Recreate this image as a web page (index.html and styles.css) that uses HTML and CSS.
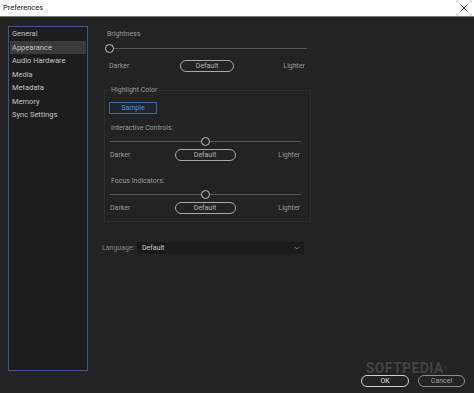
FILE: index.html
```html
<!doctype html>
<html lang="en">
<head>
    <meta charset="UTF-8">
    <title>Preferences</title>
    <link rel="stylesheet" href="styles.css">
</head>
<body>
<div class="titlebar">
    <span class="title">Preferences</span>
    <svg class="close" width="8" height="8" viewBox="0 0 8 8"><path d="M0.5 0.5L7.5 7.5M7.5 0.5L0.5 7.5" stroke="#333" stroke-width="0.9"/></svg>
</div>
<div class="main">
    <ul class="sidebar">
        <li>General</li>
        <li class="active">Appearance</li>
        <li>Audio Hardware</li>
        <li>Media</li>
        <li>Metadata</li>
        <li>Memory</li>
        <li>Sync Settings</li>
    </ul>
    <div class="content">
        <div class="brightness">
            <div class="label">Brightness</div>
            <div class="slider wide"><span class="thumb start"></span></div>
            <div class="range-row">
                <span class="left">Darker</span>
                <button class="pill b1">Default</button>
                <span class="right">Lighter</span>
            </div>
        </div>
        <fieldset class="group">
            <legend>Highlight Color</legend>
            <button class="sample">Sample</button>
            <div class="label sub">Interactive Controls:</div>
            <div class="slider"><span class="thumb mid"></span></div>
            <div class="range-row">
                <span class="left">Darker</span>
                <button class="pill b2">Default</button>
                <span class="right">Lighter</span>
            </div>
            <div class="label sub second">Focus Indicators:</div>
            <div class="slider"><span class="thumb mid"></span></div>
            <div class="range-row">
                <span class="left">Darker</span>
                <button class="pill b2">Default</button>
                <span class="right">Lighter</span>
            </div>
        </fieldset>
        <div class="lang">
            <span class="lang-label">Language:</span>
            <div class="select">
                <span>Default</span>
                <svg width="6" height="4" viewBox="0 0 6 4"><path d="M0.5 0.8L3 3.2L5.5 0.8" fill="none" stroke="#888" stroke-width="0.9"/></svg>
            </div>
        </div>
    </div>
</div>
<div class="footer">
    <span class="mark">SOFTPEDIA<sup>®</sup></span>
    <button class="pill ok">OK</button>
    <button class="pill cancel">Cancel</button>
</div>
</body>
</html>
```

FILE: styles.css
```css
* {
    margin: 0;
    padding: 0;
    list-style: none;
    box-sizing: border-box;
}

body {
    width: 474px;
    height: 393px;
    background: #232323;
    font-family: Roboto, "Noto Sans", sans-serif;
    font-size: 7px;
    color: #9a9a9a;
    overflow: hidden;
}

.titlebar {
    height: 17px;
    background: #fff;
    border-bottom: 1px solid #7c7c7c;
    display: flex;
    align-items: center;
    justify-content: space-between;
    padding: 0 6px 1px 3px;
}

.title {
    font-size: 7.5px;
    color: #222;
}

.main {
    display: flex;
    align-items: flex-start;
    padding: 9px 0 0 8px;
}

.sidebar {
    width: 80px;
    height: 345px;
    border: 1px solid #37598b;
    background: #1d1d1d;
    padding: 0 1px;
    font-size: 7.5px;
    color: #c2c2c2;
}

.sidebar li {
    height: 13.5px;
    line-height: 13.5px;
    padding-left: 2px;
}

.sidebar li.active {
    background: #3b3b3b;
}

.content {
    margin-left: 14px;
    width: 210px;
    padding-top: 3px;
}

.label {
    line-height: 10px;
}

.brightness {
    margin-left: 3px;
    width: 202px;
}

.brightness .label {
    padding-left: 2px;
}

.slider {
    position: relative;
    height: 9px;
    margin-top: 4px;
    margin-right: 9px;
}

.slider::before {
    content: '';
    position: absolute;
    left: 0;
    right: 0;
    top: 4px;
    height: 1px;
    background: #585858;
}

.slider.wide {
    margin-top: 5px;
    margin-right: 0;
}

.slider.wide::before {
    left: 8px;
}

.thumb {
    position: absolute;
    top: 0;
    width: 9px;
    height: 9px;
    border: 1.4px solid #c4c4c4;
    border-radius: 50%;
    background: #232323;
}

.thumb.start {
    left: 0;
}

.thumb.mid {
    left: calc(50% - 4.5px);
}

.range-row {
    display: grid;
    grid-template-columns: 1fr auto 1fr;
    align-items: center;
    height: 12px;
    margin-top: 3px;
}

.brightness .range-row {
    margin-top: 7px;
    padding: 0 2px 0 4px;
}

.group .range-row {
    margin-right: 10px;
}

.range-row .right {
    justify-self: end;
}

.pill {
    height: 12px;
    border: 1px solid #a8a8a8;
    border-radius: 6px;
    background: transparent;
    color: #b4b4b4;
    font-family: Roboto, "Noto Sans", sans-serif;
    font-size: 7px;
    line-height: 10px;
}

.b1 {
    width: 54px;
}

.b2 {
    width: 61px;
}

.group {
    margin: 13px 0 0 2px;
    width: 207px;
    border: 1px solid #2f2f2f;
    padding: 0 0 7px 5px;
}

.group legend {
    line-height: 10px;
    padding: 0 1px;
}

.sample {
    display: block;
    width: 48px;
    height: 12px;
    margin: 7px 0 0 -1px;
    border: 1px solid #3b6aa3;
    background: #1e2632;
    color: #5a95d8;
    font-family: Roboto, "Noto Sans", sans-serif;
    font-size: 7px;
}

.sub {
    margin-top: 9px;
    padding-left: 1px;
}

.sub.second {
    margin-top: 15px;
}

.lang {
    display: flex;
    align-items: center;
    margin-top: 20px;
    height: 12px;
}

.lang-label {
    width: 35px;
    color: #858585;
}

.select {
    width: 167px;
    height: 12px;
    background: #1b1b1b;
    display: flex;
    align-items: center;
    justify-content: space-between;
    padding: 0 4px 0 5px;
    color: #c8c8c8;
}

.footer {
    position: relative;
    display: flex;
    justify-content: flex-end;
    gap: 9px;
    margin-top: 4px;
    padding-right: 9px;
}

.ok {
    width: 48px;
    border-color: #d0d0d0;
    color: #e0e0e0;
}

.cancel {
    width: 47px;
    border-color: #8e8e8e;
    color: #a0a0a0;
}

.mark {
    position: absolute;
    right: 26px;
    top: -13px;
    font-size: 14px;
    font-weight: bold;
    line-height: 13px;
    color: rgba(190, 190, 190, 0.22);
    letter-spacing: 0.4px;
}

.mark sup {
    font-size: 5px;
    vertical-align: top;
}
```
